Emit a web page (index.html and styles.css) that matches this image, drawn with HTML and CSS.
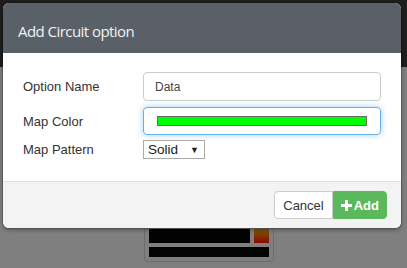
FILE: index.html
```html
<!DOCTYPE html>
<html lang="en">
<head>
    <meta charset="UTF-8">
    <meta name="viewport" content="width=device-width, initial-scale=1.0">
    <title>Add Circuit option</title>
    <link rel="stylesheet" href="styles.css">
</head>
<body>
    <div class="page">
        <div class="topbar"></div>
        <div class="meter">
            <div class="meter-row">
                <div class="meter-bar"></div>
                <div class="meter-level"></div>
            </div>
            <div class="meter-bar wide"></div>
        </div>
    </div>

    <div class="modal">
        <div class="modal-header">
            <h4>Add Circuit option</h4>
        </div>
        <div class="modal-body">
            <div class="form-row">
                <label for="option-name">Option Name</label>
                <input type="text" id="option-name" class="form-control" value="Data">
            </div>
            <div class="form-row">
                <label>Map Color</label>
                <div class="form-control focused">
                    <div class="color-swatch"></div>
                </div>
            </div>
            <div class="form-row">
                <label for="map-pattern">Map Pattern</label>
                <div class="select" id="map-pattern">
                    <span>Solid</span>
                    <span class="caret">&#9660;</span>
                </div>
            </div>
        </div>
        <div class="modal-footer">
            <button class="btn">Cancel</button>
            <button class="btn btn-success">
                <svg width="11" height="11" viewBox="0 0 11 11"><path d="M4 0h3v4h4v3H7v4H4V7H0V4h4z" fill="#fff"/></svg>
                Add
            </button>
        </div>
    </div>
</body>
</html>
```

FILE: styles.css
```css
:root {
    --header-bg: #5a6068;
    --text-color: #333;
    --success: #5cb85c;
}

body {
    margin: 0;
    width: 407px;
    height: 268px;
    overflow: hidden;
    position: relative;
    background: #7f7f7f;
    font-family: Arial, "Liberation Sans", sans-serif;
    color: var(--text-color);
}

/* page behind the dialog */
.page {
    position: absolute;
    inset: 0;
}

.topbar {
    height: 67px;
    background: #1e1e1e;
}

.meter {
    position: absolute;
    left: 144px;
    top: 214px;
    width: 120px;
    padding: 14px 4px 4px;
    background: #7f7f7f;
    border: 1px solid #6c6c6c;
    border-radius: 3px;
}

.meter-row {
    display: flex;
    gap: 4px;
    margin-bottom: 4px;
}

.meter-bar {
    flex: 1;
    height: 14px;
    background: #020402;
}

.meter-bar.wide {
    height: 10px;
}

.meter-level {
    width: 15px;
    height: 14px;
    background: linear-gradient(#7a5a00, #8a0a00);
}

/* dialog */
.modal {
    position: absolute;
    left: 3px;
    top: 3px;
    width: 398px;
    background: #fff;
    border-radius: 6px;
    overflow: hidden;
    box-shadow: 0 0 0 1px rgba(0, 0, 0, 0.15), 0 2px 4px rgba(0, 0, 0, 0.35);
}

.modal-header {
    background: var(--header-bg);
    height: 50px;
    padding: 0 15px;
    display: flex;
    align-items: center;
}

.modal-header h4 {
    margin: 0;
    padding-top: 5px;
    font-family: "Open Sans", sans-serif;
    font-weight: 400;
    font-size: 15px;
    letter-spacing: -0.55px;
    color: #f2f2f2;
}

.modal-body {
    padding: 19px 20px 22px;
    display: flex;
    flex-direction: column;
    gap: 6px;
}

.form-row {
    display: flex;
    align-items: center;
}

.form-row label {
    width: 120px;
    font-size: 13px;
}

.form-control {
    box-sizing: border-box;
    width: 238px;
    height: 29px;
    padding: 0 11px;
    border: 1px solid #ccc;
    border-radius: 4px;
    font-family: Arial, "Liberation Sans", sans-serif;
    font-size: 12px;
    color: #444;
    outline: none;
}

.form-control.focused {
    height: 28px;
    padding: 0 13px;
    border-color: #66afe9;
    box-shadow: 0 0 6px rgba(102, 175, 233, 0.6);
    display: flex;
    align-items: center;
}

.color-swatch {
    flex: 1;
    height: 8px;
    background: #00ff00;
    border: 1px solid #6a6a6a;
}

.form-row:last-child {
    margin-top: -1px;
}

.select {
    box-sizing: border-box;
    width: 62px;
    height: 19px;
    padding: 0 5px 0 4px;
    border: 1px solid #a9a9a9;
    display: flex;
    align-items: center;
    justify-content: space-between;
    font-size: 13.5px;
    color: #222;
}

.select .caret {
    font-size: 9px;
}

.modal-footer {
    background: #f3f3f3;
    border-top: 1px solid #e0e0e0;
    height: 46px;
    padding: 0 14px 0 0;
    display: flex;
    align-items: center;
    justify-content: flex-end;
}

.btn {
    height: 28px;
    padding: 0 8px;
    border: 1px solid #ccc;
    background: #fff;
    font-family: Arial, "Liberation Sans", sans-serif;
    font-size: 13px;
    color: #333;
    border-radius: 4px 0 0 4px;
}

.btn-success {
    background: var(--success);
    border-color: var(--success);
    color: #fff;
    font-weight: bold;
    border-radius: 0 4px 4px 0;
    display: flex;
    align-items: center;
    gap: 2px;
    padding: 0 7px;
}
```
